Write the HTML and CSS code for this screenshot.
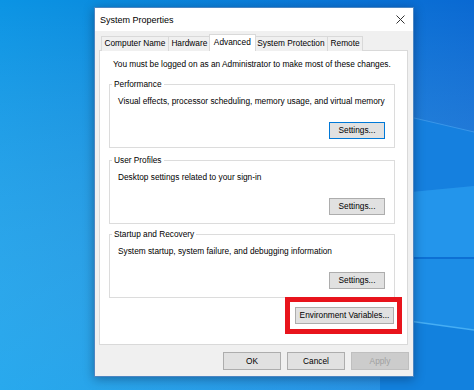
FILE: index.html
```html
<!DOCTYPE html>
<html>
<head>
<meta charset="utf-8">
<link rel="stylesheet" href="styles.css">
</head>
<body>
<div class="desktop">
  <svg class="wallpaper" width="474" height="390" viewBox="0 0 474 390">
    <defs>
      <linearGradient id="base" x1="0" y1="0" x2="1" y2="0">
        <stop offset="0" stop-color="#0b94e4"/>
        <stop offset="0.2" stop-color="#0b8ddf"/>
        <stop offset="0.75" stop-color="#0a74d8"/>
        <stop offset="1" stop-color="#0a69d2"/>
      </linearGradient>
      <linearGradient id="lift" x1="0" y1="0" x2="0" y2="1">
        <stop offset="0" stop-color="#ffffff" stop-opacity="0"/>
        <stop offset="1" stop-color="#5fd0ff" stop-opacity="0.35"/>
      </linearGradient>
    </defs>
    <rect width="474" height="390" fill="url(#base)"/>
    <rect width="474" height="390" fill="url(#lift)"/>
    <polygon points="380,110 474,132 474,186 380,195" fill="#1580df"/>
    <polygon points="380,195 474,186 474,257 380,257" fill="#2395eb"/>
    <rect x="380" y="257" width="94" height="2" fill="#0d70d4"/>
    <polygon points="380,259 474,259 474,330 380,317" fill="#1c8de6"/>
    <polygon points="380,317 474,330 474,390 380,390" fill="#1281de"/>
    <line x1="380" y1="317" x2="474" y2="330" stroke="#46aef4" stroke-width="1.5"/>
    <line x1="380" y1="110" x2="474" y2="132" stroke="#3a96e8" stroke-width="1"/>
  </svg>

  <div class="window">
    <div class="titlebar">
      <span class="title">System Properties</span>
      <svg class="close" width="9" height="9" viewBox="0 0 9 9">
        <path d="M0.5 0.5 L8.5 8.5 M8.5 0.5 L0.5 8.5" stroke="#333" stroke-width="1" fill="none"/>
      </svg>
    </div>
    <div class="client">
      <div class="tabs">
        <div class="tab">Computer Name</div>
        <div class="tab">Hardware</div>
        <div class="tab active">Advanced</div>
        <div class="tab">System Protection</div>
        <div class="tab">Remote</div>
      </div>
      <div class="panel">
        <p class="note">You must be logged on as an Administrator to make most of these changes.</p>

        <fieldset class="group">
          <legend>Performance</legend>
          <p class="desc">Visual effects, processor scheduling, memory usage, and virtual memory</p>
          <div class="actions"><button class="btn settings focus">Settings...</button></div>
        </fieldset>

        <fieldset class="group">
          <legend>User Profiles</legend>
          <p class="desc">Desktop settings related to your sign-in</p>
          <div class="actions"><button class="btn settings">Settings...</button></div>
        </fieldset>

        <fieldset class="group last">
          <legend>Startup and Recovery</legend>
          <p class="desc">System startup, system failure, and debugging information</p>
          <div class="actions"><button class="btn settings">Settings...</button></div>
        </fieldset>

        <div class="env-row">
          <div class="highlight"><button class="btn env">Environment Variables...</button></div>
        </div>
      </div>
      <div class="footer">
        <button class="btn foot">OK</button>
        <button class="btn foot">Cancel</button>
        <button class="btn foot" disabled>Apply</button>
      </div>
    </div>
  </div>
</div>
</body>
</html>
```
FILE: styles.css
```css
html, body {
  margin: 0;
  padding: 0;
}
body {
  width: 474px;
  height: 390px;
  overflow: hidden;
  font-family: "Liberation Sans", Arial, sans-serif;
  font-size: 8.3px;
  color: #000;
}
.desktop {
  position: relative;
  width: 474px;
  height: 390px;
}
.wallpaper {
  position: absolute;
  left: 0;
  top: 0;
  display: block;
}
.window {
  position: absolute;
  left: 94px;
  top: 7px;
  width: 318px;
  height: 368px;
  border: 1px solid #4c86c2;
  background: #f0f0f0;
  display: flex;
  flex-direction: column;
  box-shadow: 0 2px 10px rgba(0, 0, 30, 0.35);
}
.titlebar {
  height: 23px;
  flex: none;
  background: #fff;
  display: flex;
  align-items: center;
  justify-content: space-between;
  padding: 0 8px 0 5px;
}
.title {
  font-size: 9px;
  color: #000;
}
.close {
  display: block;
}
.client {
  flex: 1;
  display: flex;
  flex-direction: column;
  padding: 4px 5px 5px 4px;
}
.tabs {
  display: flex;
  align-items: flex-end;
  height: 16px;
  padding-left: 3px;
  margin-bottom: -1px;
  position: relative;
  z-index: 1;
}
.tab {
  box-sizing: border-box;
  height: 15px;
  line-height: 13px;
  padding: 0 2.5px;
  border: 1px solid #d9d9d9;
  border-bottom: none;
  margin-left: -1px;
  background: #f0f0f0;
  white-space: nowrap;
}
.tab.active {
  height: 17px;
  line-height: 15px;
  background: #fff;
  padding: 0 4px 0 4px;
  margin: 0 -1px 0 -2px;
  position: relative;
  z-index: 2;
}
.panel {
  flex: none;
  box-sizing: border-box;
  height: 295px;
  background: #fff;
  border: 1px solid #d9d9d9;
  padding: 8px 12px 0 9px;
}
.note {
  margin: 0 0 9px 4px;
  line-height: 11px;
  white-space: nowrap;
}
.group {
  margin: 0;
  border: 1px solid #dcdcdc;
  padding: 0 0 8px 0;
  min-width: 0;
}
.group + .group {
  margin-top: 7px;
}
.group + .group.last {
  margin-top: 5px;
}
.group legend {
  padding: 0 2px;
  margin-left: 2px;
  line-height: 11px;
}
.desc {
  margin: 6px 0 0 8px;
  line-height: 11px;
  white-space: nowrap;
}
.actions {
  display: flex;
  justify-content: flex-end;
  padding-right: 9px;
  margin-top: 15px;
}
.btn {
  font: inherit;
  color: #000;
  background: #e1e1e1;
  border: 1px solid #adadad;
  padding: 0;
  margin: 0;
  box-sizing: border-box;
  height: 17px;
  line-height: 15px;
  text-align: center;
}
.btn.focus {
  border-color: #0078d7;
}
.btn.settings {
  width: 56px;
}
.env-row {
  display: flex;
  justify-content: flex-end;
  margin-right: -7px;
  margin-top: -1px;
}
.highlight {
  border: 5px solid #e8141c;
  padding: 5px 3px 5px 5px;
  display: flex;
}
.btn.env {
  width: 99px;
}
.footer {
  display: flex;
  justify-content: flex-end;
  gap: 6px;
  margin-top: 7px;
  margin-right: -1px;
}
.btn.foot {
  width: 58px;
  height: 18px;
  line-height: 16px;
}
.btn:disabled {
  background: #cccccc;
  border-color: #bfbfbf;
  color: #a0a0a0;
}
```
